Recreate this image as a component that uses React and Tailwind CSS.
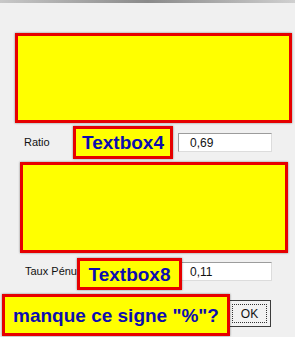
export default function App() {
  const callout =
    "absolute bg-[#ffff00] border-[3px] border-[#e60000] shadow-[0_0_2px_rgba(0,0,0,0.45)] flex items-center justify-center text-[#0c0cb0] font-bold text-[19px] leading-none";

  return (
    <div
      className="relative w-[295px] h-[337px] overflow-hidden bg-[#f0f0f0] text-[11px] text-[#111]"
      style={{ fontFamily: '"Liberation Sans", Arial, sans-serif' }}
    >
      {/* window edge */}
      <div className="h-[3px] bg-gradient-to-r from-[#c8c8c8] via-[#8a8a8a] to-[#d0d0d0]" />

      {/* form */}
      <div className="flex items-start mt-[130px]">
        <span className="pl-[24px] pt-[1px] w-[178px]">Ratio</span>
        <div className="w-[94px] h-[19px] bg-white border border-[#9c9c9c] border-r-[#dcdcdc] border-b-[#dcdcdc] pl-[11px] flex items-center text-[12px]">
          0,69
        </div>
      </div>

      <div className="flex items-start mt-[110px]">
        <span className="pl-[25px] pt-[1px] w-[178px]">Taux Pénu</span>
        <div className="w-[94px] h-[19px] bg-white border border-[#9c9c9c] border-r-[#dcdcdc] border-b-[#dcdcdc] pl-[11px] flex items-center text-[12px]">
          0,11
        </div>
      </div>

      <div className="flex mt-[19px] pl-[228px]">
        <button className="w-[43px] h-[27px] border border-[#3c3c3c] bg-[#f2f2f2] p-[3px]">
          <div className="w-full h-full border border-dotted border-[#333] flex items-center justify-center text-[12px]">
            OK
          </div>
        </button>
      </div>

      {/* annotations */}
      <div className={callout + " left-[15px] top-[33px] w-[277px] h-[90px]"} />
      <div className={callout + " left-[73px] top-[126px] w-[100px] h-[33px]"}>
        Textbox4
      </div>
      <div className={callout + " left-[20px] top-[162px] w-[268px] h-[91px]"} />
      <div className={callout + " left-[77px] top-[258px] w-[105px] h-[32px]"}>
        Textbox8
      </div>
      <div className={callout + " left-[2px] top-[294px] w-[228px] h-[42px]"}>
        manque ce signe "%"?
      </div>
    </div>
  );
}
